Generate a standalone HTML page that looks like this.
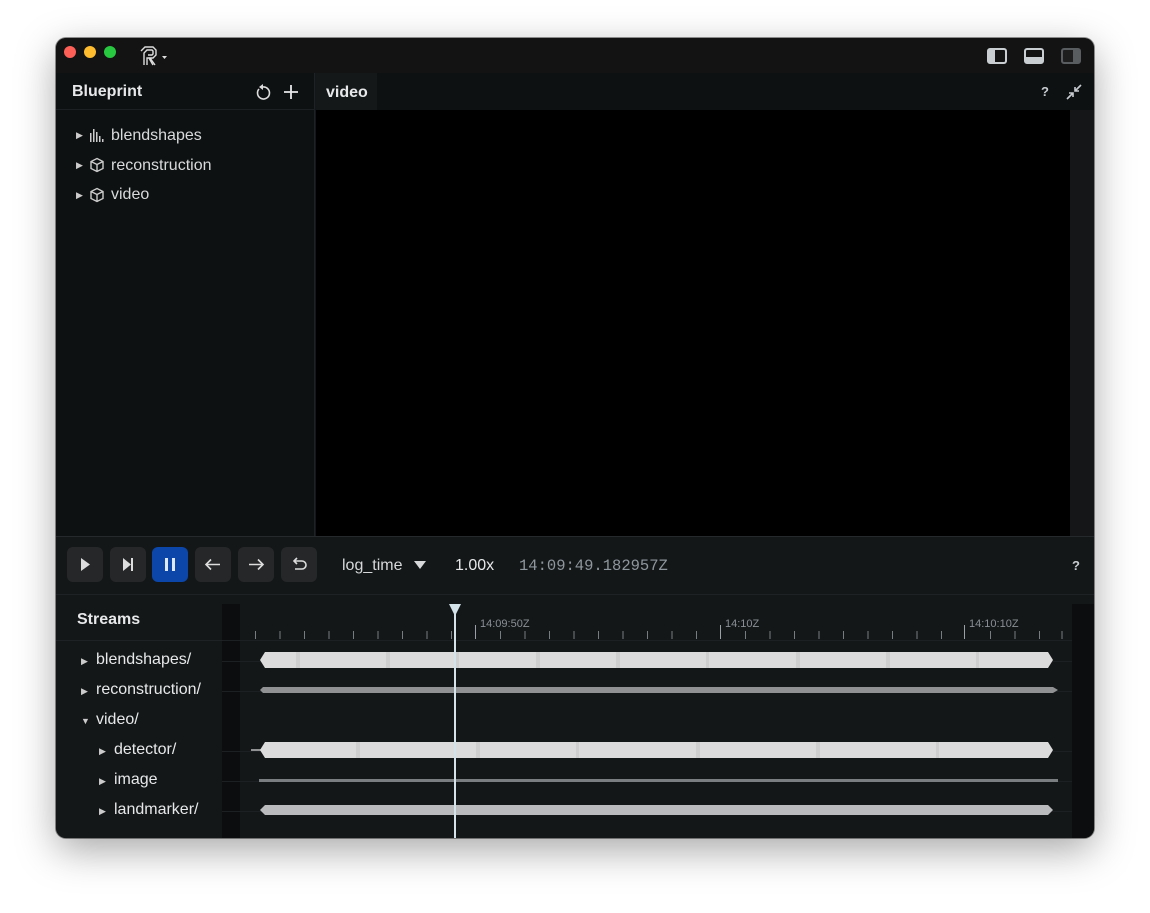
<!DOCTYPE html>
<html><head><meta charset="utf-8"><style>
*{margin:0;padding:0;box-sizing:border-box}
body{width:1150px;height:913px;background:#fff;font-family:"Liberation Sans",sans-serif;position:relative;overflow:hidden}
.win{position:absolute;left:56px;top:38px;width:1038px;height:800px;border-radius:10px;background:#141718;overflow:hidden;box-shadow:0 12px 40px rgba(0,0,0,.35),0 0 0 1px rgba(0,0,0,.4)}
.abs{position:absolute}
.t{color:#e6e8ea;font-size:16px}
.tri{position:absolute;color:#ccc;font-size:9px}
.btn{position:absolute;top:509px;width:36px;height:35px;border-radius:6px;background:#252729}
</style></head><body>
<div class="win">
 <div class="abs" style="left:0;top:0;width:1038px;height:35px;background:#131313"></div>
 <div class="abs" style="left:8px;top:8px;width:12px;height:12px;border-radius:50%;background:#fe5f57"></div>
 <div class="abs" style="left:28px;top:8px;width:12px;height:12px;border-radius:50%;background:#febc2e"></div>
 <div class="abs" style="left:48px;top:8px;width:12px;height:12px;border-radius:50%;background:#28c840"></div>
 <svg class="abs" style="left:83px;top:7px" width="32" height="22" viewBox="0 0 32 22"><g fill="none" stroke="#ddd" stroke-width="1.4"><path d="M2 6l4-4h8l3 3v5l-3 3h-3l5 7"/><path d="M5 20V8l3-3h5l1 1v3l-1 1H9"/><path d="M8 20v-7h2l4 7"/></g><path d="M23 11h5l-2.5 3z" fill="#ddd"/></svg>
 <div class="abs" style="left:931px;top:10px;width:20px;height:16px;border:2px solid #c9ced2;border-radius:3px;background:linear-gradient(90deg,#c9ced2 6px,#131313 6px)"></div>
 <div class="abs" style="left:968px;top:10px;width:20px;height:16px;border:2px solid #c9ced2;border-radius:3px;background:linear-gradient(0deg,#c9ced2 5px,#131313 5px)"></div>
 <div class="abs" style="left:1005px;top:10px;width:20px;height:16px;border:2px solid #5a5d60;border-radius:3px;background:linear-gradient(270deg,#5a5d60 6px,#1e1e1e 6px)"></div>

 <div class="abs" style="left:0;top:35px;width:259px;height:463px;background:#0e1112;border-right:1px solid #1e2224"></div>
 <div class="abs" style="left:0;top:71px;width:259px;height:1px;background:#1c2022"></div>
 <div class="abs t" style="left:16px;top:45px;font-weight:bold">Blueprint</div>
 <svg class="abs" style="left:198px;top:45px" width="18" height="18" viewBox="0 0 18 18"><path d="M5 6a6 6 0 1 0 4-2" fill="none" stroke="#ddd" stroke-width="1.6"/><path d="M9 1v6l-4-3z" fill="#ddd"/></svg>
 <svg class="abs" style="left:226px;top:45px" width="18" height="18"><path d="M9 2v14M2 9h14" stroke="#e6e8ea" stroke-width="1.8"/></svg>
 <div class="tri" style="left:20px;top:92px">▶</div>
 <svg class="abs" style="left:33px;top:90px" width="17" height="14"><g fill="#ccc"><rect x="1" y="5" width="1.5" height="9"/><rect x="4" y="1" width="1.5" height="13"/><rect x="7" y="4" width="1.5" height="10"/><rect x="10" y="8" width="1.5" height="6"/><rect x="13" y="11" width="1.5" height="3"/></g></svg>
 <div class="abs t" style="left:55px;top:89px;color:#d8dadc">blendshapes</div>
 <div class="tri" style="left:20px;top:122px">▶</div>
 <svg class="abs" style="left:33px;top:119px" width="16" height="16" viewBox="0 0 16 16"><path d="M8 1.5l6 3v7l-6 3-6-3v-7zM2 4.5l6 3 6-3M8 7.5v7" fill="none" stroke="#ccc" stroke-width="1.4"/></svg>
 <div class="abs t" style="left:55px;top:119px;color:#d8dadc">reconstruction</div>
 <div class="tri" style="left:20px;top:152px">▶</div>
 <svg class="abs" style="left:33px;top:149px" width="16" height="16" viewBox="0 0 16 16"><path d="M8 1.5l6 3v7l-6 3-6-3v-7zM2 4.5l6 3 6-3M8 7.5v7" fill="none" stroke="#ccc" stroke-width="1.4"/></svg>
 <div class="abs t" style="left:55px;top:148px;color:#d8dadc">video</div>

 <div class="abs" style="left:260px;top:35px;width:778px;height:463px;background:#000"></div>
 <div class="abs" style="left:260px;top:35px;width:778px;height:37px;background:#0e1112"></div>
 <div class="abs" style="left:260px;top:35px;width:61px;height:37px;background:#151819"></div>
 <div class="abs t" style="left:270px;top:46px;font-weight:bold">video</div>
 <div class="abs" style="left:985px;top:46px;color:#c8ccd0;font-size:13px;font-weight:bold">?</div>
 <svg class="abs" style="left:1009px;top:45px" width="18" height="18"><path d="M16 2l-6 6M10 4v4h4M2 16l6-6M4 10h4v4" fill="none" stroke="#c8ccd0" stroke-width="1.6"/></svg>
 <div class="abs" style="left:1014px;top:72px;width:24px;height:426px;background:#141617"></div>

 <div class="abs" style="left:0;top:498px;width:1038px;height:302px;background:#141718;border-top:1px solid #26292b"></div>
 <div class="btn" style="left:11px"><svg width="36" height="35"><path d="M14 11l9 6.5-9 6.5z" fill="#ddd"/></svg></div>
 <div class="btn" style="left:54px"><svg width="36" height="35"><path d="M13 11l8 6.5-8 6.5z" fill="#ddd"/><rect x="21" y="11" width="2" height="13" fill="#ddd"/></svg></div>
 <div class="btn" style="left:96px;background:#0b46a8"><svg width="36" height="35"><rect x="13" y="11" width="3" height="13" fill="#dfe8f5"/><rect x="20" y="11" width="3" height="13" fill="#dfe8f5"/></svg></div>
 <div class="btn" style="left:139px"><svg width="36" height="35"><path d="M25 17.5H11M16 12.5l-5 5 5 5" fill="none" stroke="#ddd" stroke-width="1.6"/></svg></div>
 <div class="btn" style="left:182px"><svg width="36" height="35"><path d="M11 17.5h14M20 12.5l5 5-5 5" fill="none" stroke="#ddd" stroke-width="1.6"/></svg></div>
 <div class="btn" style="left:225px"><svg width="36" height="35"><path d="M13 14h8a4 4 0 0 1 0 8h-7" fill="none" stroke="#ddd" stroke-width="1.6"/><path d="M16 11l-3 3 3 3" fill="none" stroke="#ddd" stroke-width="1.6"/></svg></div>
 <div class="abs t" style="left:286px;top:519px;color:#d6d8da">log_time</div>
 <svg class="abs" style="left:357px;top:522px" width="14" height="10"><path d="M1 1h12l-6 8z" fill="#d6d8da"/></svg>
 <div class="abs t" style="left:399px;top:519px;color:#e6e8ea">1.00x</div>
 <div class="abs" style="left:463px;top:519px;color:#8e979e;font-family:'Liberation Mono',monospace;font-size:15.5px">14:09:49.182957Z</div>
 <div class="abs" style="left:1016px;top:520px;color:#c8ccd0;font-size:13px;font-weight:bold">?</div>
 <div class="abs" style="left:0;top:556px;width:1038px;height:1px;background:#1f2224"></div>

 <div class="abs t" style="left:21px;top:573px;font-weight:bold">Streams</div>
 <div class="abs" style="left:0;top:602px;width:166px;height:1px;background:#1f2224"></div>
 <div class="tri" style="left:25px;top:618px">▶</div><div class="abs t" style="left:40px;top:613px">blendshapes/</div>
 <div class="tri" style="left:25px;top:648px">▶</div><div class="abs t" style="left:40px;top:643px">reconstruction/</div>
 <div class="tri" style="left:25px;top:678px">▼</div><div class="abs t" style="left:40px;top:673px">video/</div>
 <div class="tri" style="left:43px;top:708px">▶</div><div class="abs t" style="left:58px;top:703px">detector/</div>
 <div class="tri" style="left:43px;top:738px">▶</div><div class="abs t" style="left:58px;top:733px">image</div>
 <div class="tri" style="left:43px;top:768px">▶</div><div class="abs t" style="left:58px;top:763px">landmarker/</div>

 <svg class="abs" style="left:166px;top:566px" width="872" height="234" viewBox="166 566 872 234">
  <rect x="166" y="566" width="18" height="234" fill="#0b0d0e"/>
  <rect x="1016" y="566" width="22" height="234" fill="#0b0d0e"/>
  <g stroke="#1c2022" stroke-width="1">
   <line x1="166" y1="602.5" x2="1016" y2="602.5"/><line x1="166" y1="623.5" x2="1016" y2="623.5"/><line x1="166" y1="653.5" x2="1016" y2="653.5"/><line x1="166" y1="713.5" x2="1016" y2="713.5"/><line x1="166" y1="743.5" x2="1016" y2="743.5"/><line x1="166" y1="773.5" x2="1016" y2="773.5"/>
  </g>
  <g fill="#8a9096" font-size="11" font-family="Liberation Sans">
   <text x="424" y="589">14:09:50Z</text><text x="669" y="589">14:10Z</text><text x="913" y="589">14:10:10Z</text>
  </g>
  <g stroke="#777c80" stroke-width="1">
   <path d="M199.5 593v8M224 593v8M248.5 593v8M273 593v8M297.5 593v8M322 593v8M346.5 593v8M371 593v8M395.5 593v8M444.5 593v8M469 593v8M493.5 593v8M518 593v8M542.5 593v8M567 593v8M591.5 593v8M616 593v8M640.5 593v8M689.5 593v8M714 593v8M738.5 593v8M763 593v8M787.5 593v8M812 593v8M836.5 593v8M861 593v8M885.5 593v8M934.5 593v8M959 593v8M983.5 593v8M1006 593v8"/>
   <path d="M419.5 587v14M664.5 587v14M908.5 587v14" stroke="#9aa0a5"/>
  </g>
  <path d="M204 622l5-8h783l5 8-5 8H209z" fill="#dcdcdc"/>
  <path d="M204 652l3-3h790l5 3-5 3H207z" fill="#8f9193"/>
  <rect x="195" y="711" width="10" height="2" fill="#8f9193"/>
  <path d="M204 712l5-8h783l5 8-5 8H209z" fill="#dcdcdc"/>
  <rect x="203" y="741" width="799" height="3" fill="#7b7e81"/>
  <path d="M204 772l5-5h783l5 5-5 5H209z" fill="#b9bbbd"/>
  <g fill="#c4c4c4" opacity=".5">
   <rect x="240" y="614" width="4" height="16"/><rect x="330" y="614" width="4" height="16"/><rect x="400" y="614" width="3" height="16"/><rect x="480" y="614" width="4" height="16"/><rect x="560" y="614" width="4" height="16"/><rect x="650" y="614" width="3" height="16"/><rect x="740" y="614" width="4" height="16"/><rect x="830" y="614" width="4" height="16"/><rect x="920" y="614" width="3" height="16"/>
   <rect x="300" y="704" width="4" height="16"/><rect x="420" y="704" width="4" height="16"/><rect x="520" y="704" width="3" height="16"/><rect x="640" y="704" width="4" height="16"/><rect x="760" y="704" width="4" height="16"/><rect x="880" y="704" width="3" height="16"/>
  </g>
  <rect x="398" y="572" width="2" height="228" fill="#d4e2ea"/>
  <path d="M393 566h12l-6 12z" fill="#d4e2ea"/>
 </svg>
</div>
</body></html>
